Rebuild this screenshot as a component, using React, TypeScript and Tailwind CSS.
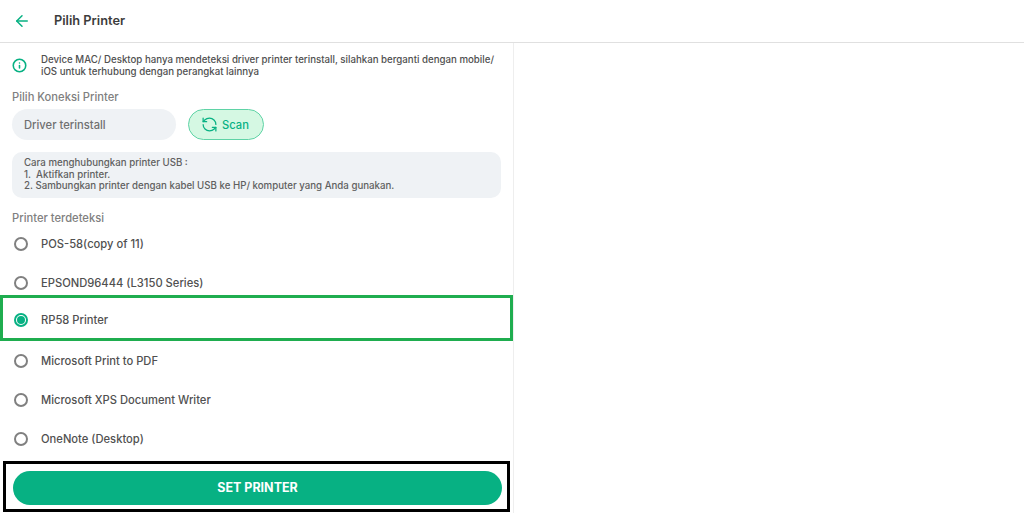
import { ArrowLeft, Info, RefreshCcw } from "lucide-react";

const printers = [
  "POS-58(copy of 11)",
  "EPSOND96444 (L3150 Series)",
  "RP58 Printer",
  "Microsoft Print to PDF",
  "Microsoft XPS Document Writer",
  "OneNote (Desktop)",
];

function PrinterRow({ name, selected }: { name: string; selected: boolean }) {
  return (
    <div className={`relative h-[39px] flex items-center pl-[14px] ${selected ? "pb-[4px]" : ""}`}>
      <span
        className={`w-[14px] h-[14px] rounded-full border-2 flex items-center justify-center ${
          selected ? "border-[#07b183]" : "border-[#808080]"
        }`}
      >
        {selected && <span className="w-[8px] h-[8px] rounded-full bg-[#07b183]" />}
      </span>
      <span className="ml-[13px] mt-[2px] text-[11.2px] font-medium text-[#505050]">{name}</span>
      {selected && (
        <div className="absolute left-0 top-[-7px] w-[513px] h-[46px] border-[3px] border-[#1fad4f]" />
      )}
    </div>
  );
}

export default function App() {
  return (
    <div className="w-[1024px] h-[513px] bg-white overflow-hidden font-['Inter',sans-serif]">
      <header className="h-[43px] border-b border-[#e0e0e0] flex items-center pl-[13px]">
        <ArrowLeft size={18} strokeWidth={2} className="text-[#07b183]" />
        <h1 className="ml-[23px] text-[12.8px] font-semibold text-[#3c3c3c]">Pilih Printer</h1>
      </header>

      <main className="w-[514px] h-[470px] border-r border-[#eeeeee] flex flex-col">
        <div className="flex items-center pl-[12px] pt-[11px]">
          <Info size={15} strokeWidth={2.5} className="text-[#07b183] shrink-0 mb-[2px]" />
          <p className="ml-[14px] text-[9.7px] leading-[12px] font-medium text-[#505050]">
            Device MAC/ Desktop hanya mendeteksi driver printer terinstall, silahkan berganti dengan mobile/
            <br />
            iOS untuk terhubung dengan perangkat lainnya
          </p>
        </div>

        <p className="ml-[12px] mt-[12px] text-[11.2px] leading-[14px] font-medium text-[#808080]">
          Pilih Koneksi Printer
        </p>

        <div className="flex items-center ml-[12px] mt-[5px] gap-[12px]">
          <div className="w-[164px] h-[31px] rounded-full bg-[#eff2f5] flex items-center pl-[12px] pt-[1px] text-[11.2px] font-medium text-[#707070]">
            Driver terinstall
          </div>
          <button className="w-[76px] h-[31px] rounded-full bg-[#d5f8e3] border border-[#5fd3a6] flex items-center pl-[12px] gap-[4px] text-[11.2px] font-medium text-[#07b183]">
            <RefreshCcw size={17} strokeWidth={1.75} />
            <span className="pt-[1px]">Scan</span>
          </button>
        </div>

        <div className="mx-[12px] mt-[12px] h-[46px] rounded-[10px] bg-[#eff2f5] pl-[12px] pt-[5px] text-[9.7px] leading-[11.5px] font-medium text-[#606060]">
          Cara menghubungkan printer USB :
          <br />
          1.&nbsp; Aktifkan printer.
          <br />
          2. Sambungkan printer dengan kabel USB ke HP/ komputer yang Anda gunakan.
        </div>

        <p className="ml-[12px] mt-[13px] text-[11.2px] leading-[14px] font-medium text-[#808080]">
          Printer terdeteksi
        </p>

        <div className="mt-[-1px]">
          {printers.map((name) => (
            <PrinterRow key={name} name={name} selected={name === "RP58 Printer"} />
          ))}
        </div>

        <div className="relative mt-[3px] ml-[3px] w-[507px] h-[51px] border-[3px] border-black p-[7px_5px_4px_7px]">
          <button className="w-full h-full rounded-full bg-[#07b183] text-white text-[12.5px] font-bold">
            SET PRINTER
          </button>
        </div>
      </main>
    </div>
  );
}
